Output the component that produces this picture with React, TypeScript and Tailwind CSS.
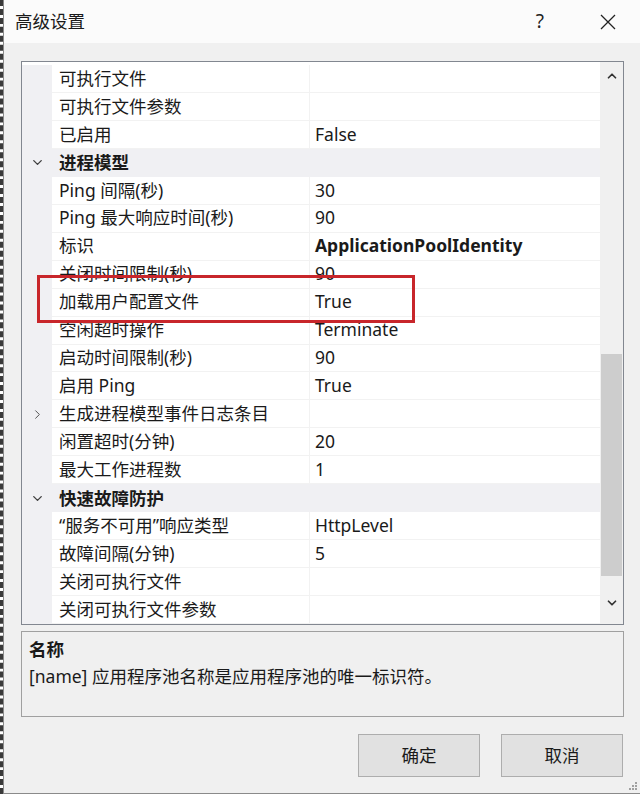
import { ChevronDown, ChevronRight, ChevronUp } from 'lucide-react';

type Row = {
    name: string;
    value?: string;
    bold?: boolean;
    category?: boolean;
    expander?: boolean;
};

const rows: Row[] = [
    { name: '可执行文件' },
    { name: '可执行文件参数' },
    { name: '已启用', value: 'False' },
    { name: '进程模型', category: true },
    { name: 'Ping 间隔(秒)', value: '30' },
    { name: 'Ping 最大响应时间(秒)', value: '90' },
    { name: '标识', value: 'ApplicationPoolIdentity', bold: true },
    { name: '关闭时间限制(秒)', value: '90' },
    { name: '加载用户配置文件', value: 'True' },
    { name: '空闲超时操作', value: 'Terminate' },
    { name: '启动时间限制(秒)', value: '90' },
    { name: '启用 Ping', value: 'True' },
    { name: '生成进程模型事件日志条目', expander: true },
    { name: '闲置超时(分钟)', value: '20' },
    { name: '最大工作进程数', value: '1' },
    { name: '快速故障防护', category: true },
    { name: '“服务不可用”响应类型', value: 'HttpLevel' },
    { name: '故障间隔(分钟)', value: '5' },
    { name: '关闭可执行文件' },
    { name: '关闭可执行文件参数' },
];

function PropertyRow({ row }: { row: Row }) {
    if (row.category) {
        return (
            <div className="flex h-[28px] items-center bg-[#f0f0f3]">
                <div className="flex w-[30px] justify-center">
                    <ChevronDown className="size-[15px] text-[#404040]" strokeWidth={2.2} />
                </div>
                <span className="pl-[7px] font-bold">{row.name}</span>
            </div>
        );
    }
    return (
        <div className="flex h-[28px]">
            <div className="flex w-[30px] items-center justify-center bg-[#f0f0f3]">
                {row.expander && <ChevronRight className="size-[15px] text-[#555]" strokeWidth={1.6} />}
            </div>
            <div className="flex w-[258px] items-center border-b border-r border-[#f2f2f2] bg-white pl-[7px]">
                <span className="whitespace-nowrap">{row.name}</span>
            </div>
            <div className="flex flex-1 items-center border-b border-[#f2f2f2] bg-white pl-[5px]">
                <span className={row.bold ? 'font-bold' : ''}>{row.value}</span>
            </div>
        </div>
    );
}

export default function App() {
    return (
        <div
            className="flex h-[799px] w-[640px] flex-col overflow-hidden bg-white text-[17.5px] leading-none text-[#1a1a1a]"
            style={{ fontFamily: '"Noto Sans", "Noto Sans CJK SC", sans-serif' }}
        >
            <div className="flex h-[794px] border-l-[3px] border-dashed border-l-[#3a3a3a]">
                <div className="flex flex-1 flex-col border-l border-b border-[#8a8a8a]">
                    {/* title bar */}
                    <div className="flex h-[43px] items-center bg-[#fbfbfb] pl-[11px]">
                        <span className="text-[17.5px]">高级设置</span>
                        <span className="ml-auto mr-[56px] text-[19px] text-[#222]">?</span>
                        <svg width="16" height="16" viewBox="0 0 16 16" className="mr-[24px]">
                            <path d="M1 1 L15 15 M15 1 L1 15" stroke="#222" strokeWidth="1.3" fill="none" />
                        </svg>
                    </div>

                    {/* body */}
                    <div className="relative flex flex-1 flex-col bg-[#f0f0f0] pl-[17px] pr-[16px] pt-[18px]">
                        <div className="flex h-[564px] border border-[#828790] bg-white">
                            <div className="flex flex-1 flex-col overflow-hidden pt-[3px]">
                                {rows.map((row) => (
                                    <PropertyRow key={row.name} row={row} />
                                ))}
                            </div>
                            <div className="flex w-[23px] flex-col items-center bg-[#f0f0f0]">
                                <ChevronUp className="mt-[7px] size-[14px] text-[#333]" strokeWidth={3} />
                                <div className="mt-[271px] h-[222px] w-[21px] bg-[#cdcdcd]" />
                                <ChevronDown className="mt-[20px] size-[14px] text-[#333]" strokeWidth={3} />
                            </div>
                        </div>

                        {/* description */}
                        <div className="mt-[6px] flex h-[86px] flex-col border border-[#a0a0a0] bg-[#f0f0f0] px-[7px] pt-[9px]">
                            <span className="font-bold">名称</span>
                            <span className="mt-[9px]">[name] 应用程序池名称是应用程序池的唯一标识符。</span>
                        </div>

                        {/* buttons */}
                        <div className="mt-[17px] flex justify-end gap-[21px] pr-[1px]">
                            <button className="h-[43px] w-[122px] border border-[#adadad] bg-[#e1e1e1] text-[17.5px]">确定</button>
                            <button className="h-[43px] w-[122px] border border-[#adadad] bg-[#e1e1e1] text-[17.5px]">取消</button>
                        </div>

                        {/* resize grip */}
                        <div className="absolute bottom-[3px] right-[3px] grid grid-cols-3 gap-[1px]">
                            <span className="size-[2px]" />
                            <span className="size-[2px]" />
                            <span className="size-[2px] bg-[#a0a0a0]" />
                            <span className="size-[2px]" />
                            <span className="size-[2px] bg-[#a0a0a0]" />
                            <span className="size-[2px] bg-[#a0a0a0]" />
                            <span className="size-[2px] bg-[#a0a0a0]" />
                            <span className="size-[2px] bg-[#a0a0a0]" />
                            <span className="size-[2px] bg-[#a0a0a0]" />
                        </div>

                        {/* red highlight */}
                        <div className="pointer-events-none absolute left-[33px] top-[232px] h-[48px] w-[378px] border-[3px] border-[#c8262b]" />
                    </div>
                </div>
            </div>
            <div className="h-[5px] bg-white" />
        </div>
    );
}
